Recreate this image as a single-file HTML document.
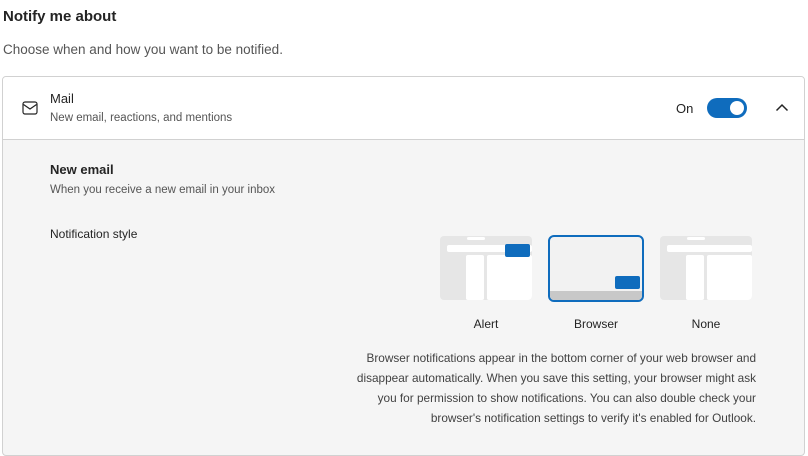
<!DOCTYPE html>
<html><head><meta charset="utf-8"><style>
*{margin:0;padding:0;box-sizing:border-box}
body{width:808px;height:427px;overflow:hidden;background:#fff;font-family:"Liberation Sans",sans-serif;color:#242424;position:relative}
.a{position:absolute;white-space:nowrap}
.card{position:absolute;left:2px;top:76px;width:803px;height:380px;border:1px solid #d1d1d1;border-radius:4px;overflow:hidden;background:#f5f5f5}
.hdr{position:absolute;left:0;top:0;right:0;height:63px;background:#fff;border-bottom:1px solid #d1d1d1}
.th{position:absolute;width:92px;height:64px;background:#e6e6e6;border-radius:4px;overflow:hidden}
.w{position:absolute;background:#fff;border-radius:2px}
.blue{position:absolute;background:#0f6cbd;border-radius:2px}
.lbl{position:absolute;font-size:12px;text-align:center;width:92px}
.desc{position:absolute;top:348px;font-size:11.8px;line-height:20px;text-align:right;color:#424242;white-space:nowrap}
</style></head><body>
<div class="a" style="left:3px;top:8px;font-size:15px;font-weight:bold">Notify me about</div>
<div class="a" style="left:3px;top:42px;font-size:13.5px;color:#555">Choose when and how you want to be notified.</div>
<div class="card">
 <div class="hdr">
  <svg class="a" style="left:19px;top:24px" width="16" height="14" viewBox="0 0 16 14"><rect x="1" y="1" width="14" height="12" rx="2" fill="none" stroke="#242424" stroke-width="1.2"/><path d="M1.5 3.5L8 8l6.5-4.5" fill="none" stroke="#242424" stroke-width="1.2"/></svg>
  <div class="a" style="left:47px;top:14px;font-size:13px">Mail</div>
  <div class="a" style="left:47px;top:35px;font-size:11.5px;color:#555">New email, reactions, and mentions</div>
  <div class="a" style="left:673px;top:24px;font-size:13px">On</div>
  <div class="a" style="left:704px;top:21px;width:40px;height:20px;border-radius:10px;background:#0f6cbd"><div style="position:absolute;right:3px;top:3px;width:14px;height:14px;border-radius:50%;background:#fff"></div></div>
  <svg class="a" style="left:772px;top:26px" width="14" height="9" viewBox="0 0 14 9"><path d="M1.5 7.5L7 2l5.5 5.5" fill="none" stroke="#242424" stroke-width="1.5"/></svg>
 </div>
 <div class="a" style="left:47px;top:85px;font-size:13px;font-weight:bold">New email</div>
 <div class="a" style="left:47px;top:107px;font-size:11.5px;color:#555">When you receive a new email in your inbox</div>
 <div class="a" style="left:47px;top:150px;font-size:12px">Notification style</div>

 <div class="th" style="left:437px;top:159px">
  <div class="w" style="left:27px;top:1px;width:18px;height:3px;border-radius:2px"></div>
  <div class="w" style="left:7px;top:9px;width:85px;height:7px"></div>
  <div class="w" style="left:26px;top:19px;width:18px;height:45px"></div>
  <div class="w" style="left:47px;top:19px;width:45px;height:45px"></div>
  <div class="blue" style="left:65px;top:8px;width:25px;height:13px"></div>
 </div>
 <div class="lbl" style="left:437px;top:240px">Alert</div>

 <div style="position:absolute;left:545px;top:158px;width:96px;height:67px;border:2px solid #0f6cbd;border-radius:6px;background:#f2f2f2;overflow:hidden">
  <div style="position:absolute;left:0;right:0;bottom:0;height:9px;background:#c8c8c8"></div>
  <div class="blue" style="left:65px;top:39px;width:25px;height:13px"></div>
 </div>
 <div class="lbl" style="left:547px;top:240px">Browser</div>

 <div class="th" style="left:657px;top:159px">
  <div class="w" style="left:27px;top:1px;width:18px;height:3px;border-radius:2px"></div>
  <div class="w" style="left:7px;top:9px;width:85px;height:7px"></div>
  <div class="w" style="left:26px;top:19px;width:18px;height:45px"></div>
  <div class="w" style="left:47px;top:19px;width:45px;height:45px"></div>
 </div>
 <div class="lbl" style="left:657px;top:240px">None</div>
</div>
<div class="desc" style="right:52px">Browser notifications appear in the bottom corner of your web browser and<br>disappear automatically. When you save this setting, your browser might ask<br>you for permission to show notifications. You can also double check your<br>browser's notification settings to verify it's enabled for Outlook.</div>
</body></html>
